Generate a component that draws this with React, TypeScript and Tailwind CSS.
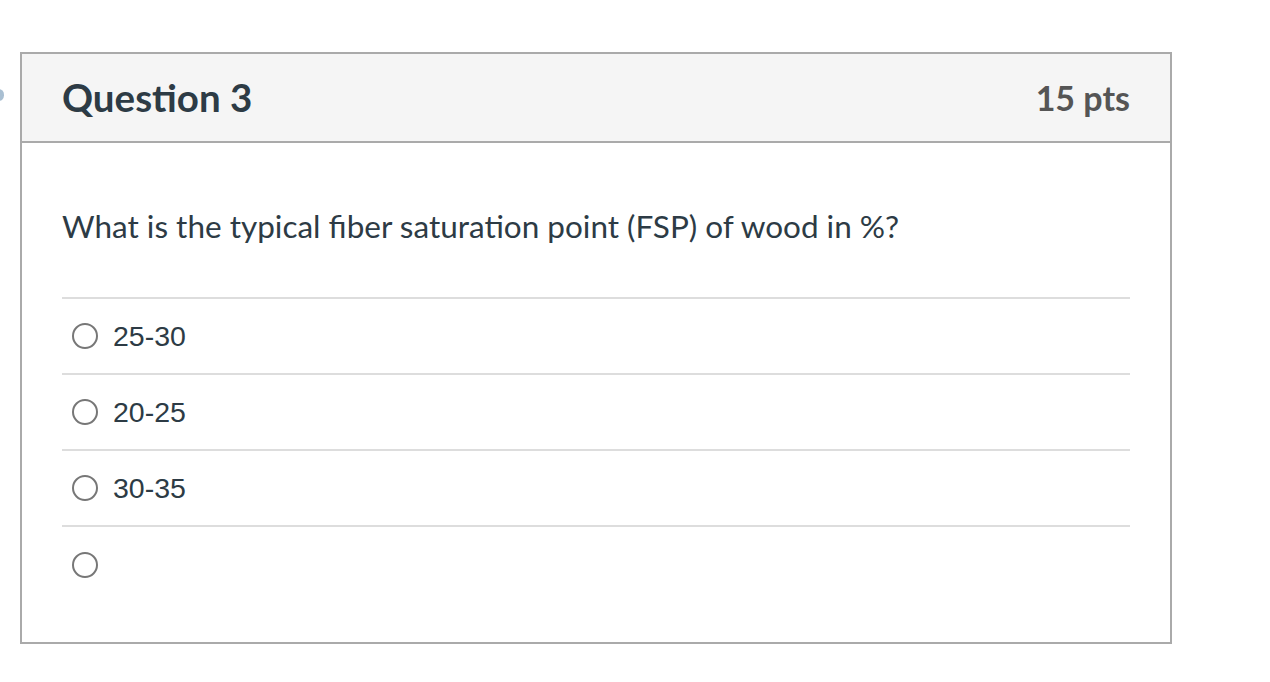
import * as React from 'react'

const answers = ['25-30', '20-25', '30-35', '']

function Radio() {
  return (
    <span className="w-[26px] h-[26px] rounded-full border-2 border-[#777777] bg-white flex-shrink-0" />
  )
}

export default function App() {
  return (
    <div className="relative w-[1270px] h-[682px] bg-white overflow-hidden pt-[52px] pl-[20px]">
      {/* partial marker at page edge */}
      <span className="absolute left-[-7px] top-[89px] w-[11px] h-[12px] rounded-full bg-[#a9bfd2]" />

      <div className="w-[1152px] border-2 border-[#aaaaaa]">
        {/* Header */}
        <div className="h-[89px] bg-[#f5f5f5] border-b-2 border-[#aaaaaa] flex items-center justify-between px-[40px] font-['Lato',sans-serif]">
          <h2 className="text-[38.5px] font-bold text-[#2d3b45]">Question 3</h2>
          <span className="text-[34px] font-bold text-[#555555]">15 pts</span>
        </div>

        {/* Body */}
        <div className="px-[40px] pt-[61px] pb-[39px]">
          <p className="font-['Lato',sans-serif] text-[31.5px] text-[#2d3b45] leading-[45px]">
            What is the typical fiber saturation point (FSP) of wood in %?
          </p>

          <div className="mt-[48px] border-t-2 border-[#dddddd]">
            {answers.map((a, i) => (
              <div
                key={i}
                className={
                  i < answers.length - 1
                    ? 'h-[76px] flex items-center gap-[15px] pl-[10px] border-b-2 border-[#dddddd]'
                    : 'h-[76px] flex items-center gap-[15px] pl-[10px]'
                }
              >
                <Radio />
                <span className="font-['Liberation_Sans',Arial,sans-serif] text-[28.5px] text-[#2d3b45]">{a}</span>
              </div>
            ))}
          </div>
        </div>
      </div>
    </div>
  )
}
